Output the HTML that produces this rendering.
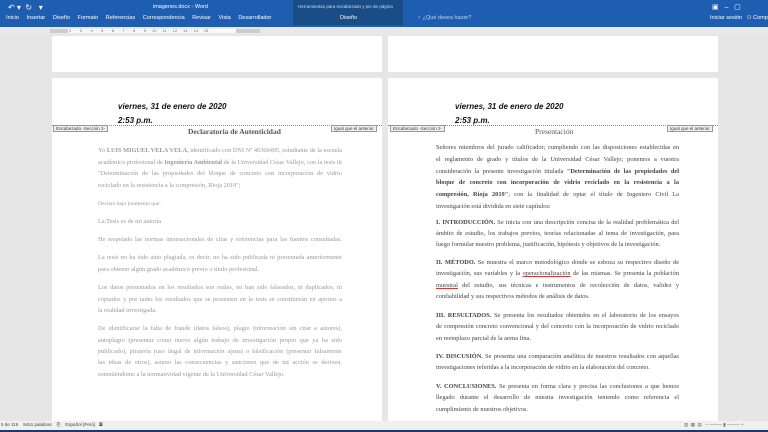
<!DOCTYPE html>
<html><head><meta charset="utf-8"><style>
*{margin:0;padding:0;box-sizing:border-box}
body{width:768px;height:432px;overflow:hidden;background:#e6e6e6;font-family:"Liberation Sans",sans-serif;position:relative}
.a{position:absolute;white-space:nowrap}
.top{position:absolute;left:0;top:0;width:768px;height:27px;background:#1e5eb0}
.ctx{position:absolute;left:293px;top:0;width:110px;height:25px;background:#1a4c86}
.w{color:#fff;font-size:5.5px}
.page{position:absolute;background:#fff}
.ln{position:absolute;font-family:"Liberation Serif",serif;font-size:6.35px;line-height:9px;text-align:justify;text-align-last:justify;white-space:nowrap;overflow:hidden}
.l{color:#9a9a9a}
.r{color:#444}
.e{text-align-last:left}
.hd{position:absolute;font-family:"Liberation Sans",sans-serif;font-style:italic;font-weight:bold;font-size:8px;color:#111}
.tag{position:absolute;border:1px solid #999;background:#eee;font-size:4.5px;color:#444;height:7px;line-height:5px;padding:0 2px}
.dash{position:absolute;height:0;border-top:1px dotted #888}
.ttl{position:absolute;font-family:"Liberation Serif",serif;font-size:7.5px;color:#555;font-weight:bold;background:#fff;padding:0 2px}
</style></head><body>
<div class="top"></div><div class="ctx"></div>
<div class="a w" style="left:8px;top:3px;font-size:8px">↶ ▾ &nbsp;↻ &nbsp;&nbsp;▾</div>
<div class="a w" style="left:153px;top:4px">imagenes.docx - Word</div>
<div class="a w" style="left:298px;top:4px;font-size:4.5px;color:#cfdcee">Herramientas para encabezado y pie de página</div>
<div class="a w" style="left:0;top:15px">&nbsp;&nbsp;&nbsp;&nbsp;Inicio&nbsp;&nbsp;&nbsp;&nbsp;&nbsp;Insertar&nbsp;&nbsp;&nbsp;&nbsp;&nbsp;Diseño&nbsp;&nbsp;&nbsp;&nbsp;&nbsp;Formato&nbsp;&nbsp;&nbsp;&nbsp;&nbsp;Referencias&nbsp;&nbsp;&nbsp;&nbsp;&nbsp;Correspondencia&nbsp;&nbsp;&nbsp;&nbsp;&nbsp;Revisar&nbsp;&nbsp;&nbsp;&nbsp;&nbsp;Vista&nbsp;&nbsp;&nbsp;&nbsp;&nbsp;Desarrollador</div>
<div class="a w" style="left:340px;top:15px">Diseño</div>
<div class="a w" style="left:417px;top:15px;color:#c5d4ea">♀ ¿Qué desea hacer?</div>
<div class="a w" style="left:710px;top:15px">Iniciar sesión &nbsp; ⚇ Comp</div>
<div class="a w" style="left:712px;top:3px;font-size:7px">▣ &nbsp; – &nbsp; ▢</div>
<div class="a" style="left:0;top:27px;width:768px;height:8px;background:#e8e8e8"></div>
<div class="a" style="left:50px;top:29px;width:210px;height:4px;background:#fafafa;font-size:4px;color:#666;line-height:4px">&nbsp;· · · 1 · · · 2 · · · 3 · · · 4 · · · 5 · · · 6 · · · 7 · · · 8 · · · 9 · · 10 · · 11 · · 12 · · 13 · · 14 · · 15</div>
<div class="a" style="left:50px;top:29px;width:18px;height:4px;background:#ccc"></div>
<div class="a" style="left:236px;top:29px;width:24px;height:4px;background:#ccc"></div>

<div class="page" style="left:52px;top:36px;width:330px;height:36px"></div>
<div class="page" style="left:388px;top:36px;width:330px;height:36px"></div>
<div class="page" style="left:52px;top:78px;width:330px;height:343px"></div>
<div class="page" style="left:388px;top:78px;width:330px;height:343px"></div>

<div class="hd" style="left:118px;top:102px">viernes, 31 de enero de 2020</div>
<div class="hd" style="left:118px;top:116px">2:53 p.m.</div>
<div class="hd" style="left:455px;top:102px">viernes, 31 de enero de 2020</div>
<div class="hd" style="left:455px;top:116px">2:53 p.m.</div>
<div class="dash" style="left:52px;top:125px;width:330px"></div>
<div class="dash" style="left:388px;top:125px;width:330px"></div>
<div class="tag" style="left:53px;top:125px">Encabezado -Sección 2-</div>
<div class="tag" style="left:331px;top:125px">Igual que el anterior</div>
<div class="tag" style="left:390px;top:125px">Encabezado -Sección 2-</div>
<div class="tag" style="left:667px;top:125px">Igual que el anterior</div>
<div class="ttl" style="left:186px;top:127px">Declaratoria de Autenticidad</div>
<div class="ttl" style="left:533px;top:127px;font-weight:normal">Presentación</div>

<div class="ln l" style="left:98px;width:244px;top:146px">Yo <b>LUIS MIGUEL VELA VELA,</b> identificado con DNI Nº 46360495, estudiante de la escuela</div>
<div class="ln l" style="left:98px;width:244px;top:158px">académico profesional de <b>Ingeniería Ambiental</b> de la Universidad César Vallejo, con la tesis titulada:</div>
<div class="ln l" style="left:98px;width:244px;top:169px">"Determinación de las propiedades del bloque de concreto con incorporación de vidrio</div>
<div class="ln l e" style="left:98px;width:244px;top:181px">reciclado en la resistencia a la compresión, Rioja 2019";</div>
<div class="ln l e" style="left:98px;width:244px;top:200px;font-size:5.5px">Declaro bajo juramento que:</div>
<div class="ln l e" style="left:98px;width:244px;top:217px">La Tesis es de mi autoría</div>
<div class="ln l" style="left:98px;width:244px;top:235px">He respetado las normas internacionales de citas y referencias para las fuentes consultadas.</div>
<div class="ln l" style="left:98px;width:244px;top:253px">La tesis no ha sido auto plagiada, es decir, no ha sido publicada ni presentada anteriormente</div>
<div class="ln l e" style="left:98px;width:244px;top:265px">para obtener algún grado académico previo o título profesional.</div>
<div class="ln l" style="left:98px;width:244px;top:283px">Los datos presentados en los resultados son reales, no han sido falseados, ni duplicados, ni</div>
<div class="ln l" style="left:98px;width:244px;top:295px">copiados y por tanto los resultados que se presenten en la tesis se constituirán en aportes a</div>
<div class="ln l e" style="left:98px;width:244px;top:306px">la realidad investigada.</div>
<div class="ln l" style="left:98px;width:244px;top:324px">De identificarse la falta de fraude (datos falsos), plagio (información sin citar a autores),</div>
<div class="ln l" style="left:98px;width:244px;top:336px">autoplagio (presentar como nuevo algún trabajo de investigación propio que ya ha sido</div>
<div class="ln l" style="left:98px;width:244px;top:347px">publicado), piratería (uso ilegal de información ajena) o falsificación (presentar falsamente</div>
<div class="ln l" style="left:98px;width:244px;top:358px">las ideas de otros), asumo las consecuencias y sanciones que de mi acción se deriven,</div>
<div class="ln l e" style="left:98px;width:244px;top:370px">sometiéndome a la normatividad vigente de la Universidad César Vallejo.</div>

<div class="ln r" style="left:436px;width:243px;top:143px">Señores miembros del jurado calificador; cumpliendo con las disposiciones establecidas en</div>
<div class="ln r" style="left:436px;width:243px;top:155px">el reglamento de grado y títulos de la Universidad César Vallejo; ponemos a vuestra</div>
<div class="ln r" style="left:436px;width:243px;top:167px">consideración la presente investigación titulada <b>"Determinación de las propiedades del</b></div>
<div class="ln r" style="left:436px;width:243px;top:178px"><b>bloque de concreto con incorporación de vidrio reciclado en la resistencia a la</b></div>
<div class="ln r" style="left:436px;width:243px;top:190px"><b>compresión, Rioja 2019"</b>; con la finalidad de optar el título de Ingeniero Civil La</div>
<div class="ln r e" style="left:436px;width:243px;top:202px">investigación está dividida en siete capítulos:</div>
<div class="ln r" style="left:436px;width:243px;top:218px"><b>I. INTRODUCCIÓN.</b> Se inicia con una descripción concisa de la realidad problemática del</div>
<div class="ln r" style="left:436px;width:243px;top:229px">ámbito de estudio, los trabajos previos, teorías relacionadas al tema de investigación, para</div>
<div class="ln r e" style="left:436px;width:243px;top:240px">luego formular nuestro problema, justificación, hipótesis y objetivos de la investigación.</div>
<div class="ln r" style="left:436px;width:243px;top:258px"><b>II. MÉTODO.</b> Se muestra el marco metodológico donde se esboza su respectivo diseño de</div>
<div class="ln r" style="left:436px;width:243px;top:269px">investigación, sus variables y la <u style="text-decoration-color:#d33">operacionalización</u> de las mismas. Se presenta la población</div>
<div class="ln r" style="left:436px;width:243px;top:281px"><u style="text-decoration-color:#d33">muestral</u> del estudio, sus técnicas e instrumentos de recolección de datos, validez y</div>
<div class="ln r e" style="left:436px;width:243px;top:292px">confiabilidad y sus respectivos métodos de análisis de datos.</div>
<div class="ln r" style="left:436px;width:243px;top:311px"><b>III. RESULTADOS.</b> Se presenta los resultados obtenidos en el laboratorio de los ensayos</div>
<div class="ln r" style="left:436px;width:243px;top:322px">de compresión concreto convencional y del concreto con la incorporación de vidrio reciclado</div>
<div class="ln r e" style="left:436px;width:243px;top:334px">en reemplazo parcial de la arena fina.</div>
<div class="ln r" style="left:436px;width:243px;top:352px"><b>IV. DISCUSIÓN.</b> Se presenta una comparación analítica de nuestros resultados con aquellas</div>
<div class="ln r e" style="left:436px;width:243px;top:363px">investigaciones referidas a la incorporación de vidrio en la elaboración del concreto.</div>
<div class="ln r" style="left:436px;width:243px;top:382px"><b>V. CONCLUSIONES.</b> Se presenta en forma clara y precisa las conclusiones a que hemos</div>
<div class="ln r" style="left:436px;width:243px;top:393px">llegado durante el desarrollo de nuestra investigación teniendo como referencia el</div>
<div class="ln r e" style="left:436px;width:243px;top:405px">cumplimiento de nuestros objetivos.</div>

<div class="a" style="left:0;top:421px;width:768px;height:9px;background:#f0f0f0"></div>
<div class="a" style="left:1px;top:422px;font-size:4.5px;color:#444">5 de 119 &nbsp;&nbsp; 9451 palabras &nbsp;&nbsp; ⎘ &nbsp;&nbsp; Español (Perú) &nbsp; ▦</div>
<div class="a" style="left:684px;top:422px;font-size:4.5px;color:#666">▥ &nbsp;▦ &nbsp;▤ &nbsp; – ──── ▮ ──── +</div>
<div class="a" style="left:0;top:430px;width:768px;height:2px;background:#1b3a6b"></div>
</body></html>
